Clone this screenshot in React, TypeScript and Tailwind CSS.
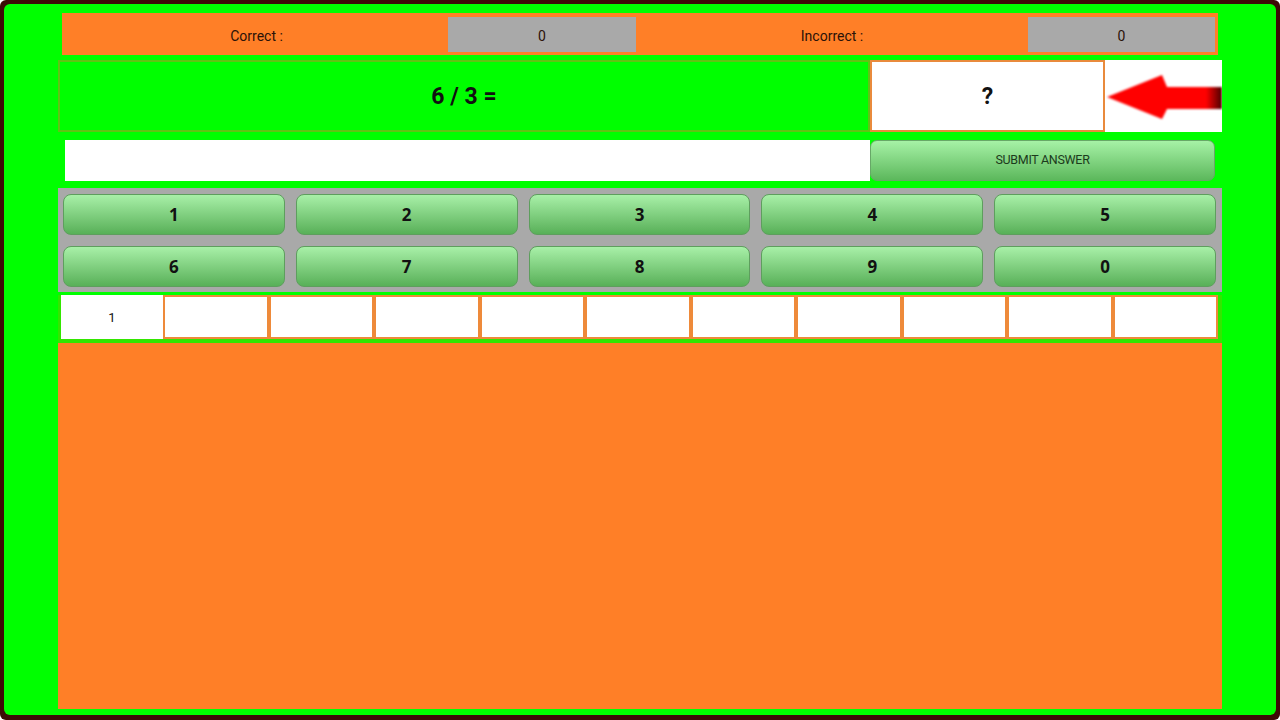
import React from 'react';

const keys = ['1', '2', '3', '4', '5', '6', '7', '8', '9', '0'];
const tabs = ['1', '', '', '', '', '', '', '', '', '', ''];

function Arrow() {
  return (
    <svg width="117" height="72" viewBox="0 0 117 72">
      <defs>
        <linearGradient id="shaft" x1="0" y1="0" x2="1" y2="0">
          <stop offset="0.86" stopColor="#ff0000" />
          <stop offset="1" stopColor="#4a0000" />
        </linearGradient>
        <filter id="soft" x="-5%" y="-5%" width="110%" height="110%">
          <feGaussianBlur stdDeviation="0.8" />
        </filter>
      </defs>
      <polygon
        points="2,37 57,15 62,27 117,27 117,49 62,49 57,59"
        fill="url(#shaft)"
        filter="url(#soft)"
      />
    </svg>
  );
}

export default function App() {
  return (
    <div className="w-[1280px] h-[720px] bg-white">
      <div className="w-full h-full bg-[#3d0b06] pt-[4px] pb-[5px] px-[4px] rounded-[6px]">
        <div
          className="w-full h-full bg-[#00ff00] rounded-[6px] pl-[54px] pr-[54px] pt-[9px] pb-[6px] flex flex-col"
          style={{ fontFamily: 'Roboto, "Liberation Sans", sans-serif' }}
        >
          {/* score bar */}
          <div className="mx-[4px] h-[42px] bg-[#ff7f27] flex items-stretch px-[3px] pt-[4px] pb-[3px] text-[14px] text-[#2b1208]">
            <div className="w-[383px] flex items-center justify-center pt-[3px]">Correct :</div>
            <div className="w-[188px] bg-[#a9a9a9] flex items-center justify-center pt-[3px]">0</div>
            <div className="flex-1 flex items-center justify-center pt-[3px]">Incorrect :</div>
            <div className="w-[187px] bg-[#a9a9a9] flex items-center justify-center pt-[3px]">0</div>
          </div>

          {/* question row */}
          <div className="mt-[5px] h-[72px] flex">
            <div className="w-[812px] border-2 border-[#5fc414] bg-[#00ff00] flex items-center justify-center pt-[3px]">
              <span className="text-[23px] font-bold text-[#111]">6 / 3 =</span>
            </div>
            <div className="w-[235px] border-2 border-[#e98a3c] bg-white flex items-center justify-center pt-[3px]">
              <span className="text-[23px] font-bold text-[#111]">?</span>
            </div>
            <div className="flex-1 bg-white flex items-center">
              <Arrow />
            </div>
          </div>

          {/* answer row */}
          <div className="mt-[8px] h-[41px] flex pl-[7px] pr-[7px]">
            <div className="w-[805px] bg-white" />
            <button className="flex-1 rounded-[7px] border border-[#67a867] bg-gradient-to-b from-[#a6f2a6] to-[#5cb85c] text-[12.5px] text-[#1c3a1c] tracking-tight">
              SUBMIT ANSWER
            </button>
          </div>

          {/* keypad */}
          <div className="mt-[7px] h-[104px] bg-[#a9a9a9] pt-[6px] pb-[5px] pl-[5px] pr-[6px] grid grid-cols-5 gap-x-[11px] gap-y-[11px]">
            {keys.map((k) => (
              <button
                key={k}
                className="rounded-[8px] border border-[#5e9e5e] bg-gradient-to-b from-[#a8f0a8] to-[#58b058] text-[17px] font-bold text-[#111] pt-[1px]"
                style={{ fontFamily: '"Open Sans", "DejaVu Sans", sans-serif' }}
              >
                {k}
              </button>
            ))}
          </div>

          {/* tabs */}
          <div className="mt-[3px] h-[48px] bg-[#33e600] pl-[3px] pr-[4px] pb-[4px] flex">
            {tabs.map((t, i) => (
              <div
                key={i}
                className={
                  i === 0
                    ? 'w-[102px] bg-white flex items-center justify-center text-[13px] text-[#111] pt-[2px]'
                    : 'flex-1 bg-white border-2 border-[#ee8a3a]'
                }
              >
                {t}
              </div>
            ))}
          </div>

          {/* work area */}
          <div className="flex-1 bg-[#ff7f27]" />
        </div>
      </div>
    </div>
  );
}
